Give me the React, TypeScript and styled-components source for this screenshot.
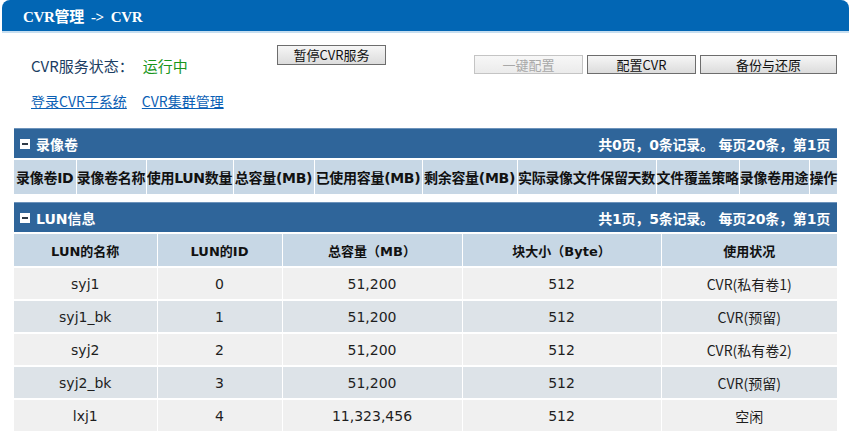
import React from 'react';
import styled, { createGlobalStyle } from 'styled-components';

const GlobalStyle = createGlobalStyle`
  body {
    margin: 0;
    background: #ffffff;
    font-family: "DejaVu Sans", "Noto Sans CJK SC", sans-serif;
  }
`;

interface LunRow {
  name: string;
  id: number;
  total: string;
  block: number;
  usage: string;
}

const volumeColumns: { title: string; width: number }[] = [
  { title: '录像卷ID', width: 62 },
  { title: '录像卷名称', width: 70 },
  { title: '使用LUN数量', width: 87 },
  { title: '总容量(MB)', width: 81 },
  { title: '已使用容量(MB)', width: 108 },
  { title: '剩余容量(MB)', width: 95 },
  { title: '实际录像文件保留天数', width: 139 },
  { title: '文件覆盖策略', width: 83 },
  { title: '录像卷用途', width: 70 },
  { title: '操作', width: 28 },
];

const lunColumns: { title: string; width: number }[] = [
  { title: 'LUN的名称', width: 143 },
  { title: 'LUN的ID', width: 125 },
  { title: '总容量（MB）', width: 180 },
  { title: '块大小（Byte）', width: 199 },
  { title: '使用状况', width: 176 },
];

const lunRows: LunRow[] = [
  { name: 'syj1', id: 0, total: '51,200', block: 512, usage: 'CVR(私有卷1)' },
  { name: 'syj1_bk', id: 1, total: '51,200', block: 512, usage: 'CVR(预留)' },
  { name: 'syj2', id: 2, total: '51,200', block: 512, usage: 'CVR(私有卷2)' },
  { name: 'syj2_bk', id: 3, total: '51,200', block: 512, usage: 'CVR(预留)' },
  { name: 'lxj1', id: 4, total: '11,323,456', block: 512, usage: '空闲' },
];

const App = () => {
  return (
    <>
      <GlobalStyle />
      <Page>
        <TopBar>
          <TopTitle>CVR管理 &nbsp;-&gt;&nbsp; CVR</TopTitle>
        </TopBar>

        <InfoArea>
          <InfoRow>
            <Status>
              CVR服务状态：<Running>运行中</Running>
            </Status>
            <PauseButton>暂停CVR服务</PauseButton>
            <ButtonGroup>
              <Button width={109} disabled>
                一键配置
              </Button>
              <Button width={109}>配置CVR</Button>
              <Button width={137}>备份与还原</Button>
            </ButtonGroup>
          </InfoRow>
          <LinkRow>
            <Link href="#">登录CVR子系统</Link>
            <Link href="#">CVR集群管理</Link>
          </LinkRow>
        </InfoArea>

        <Panel>
          <PanelHeader>
            <PanelTitle>
              <Collapse />
              录像卷
            </PanelTitle>
            <PageInfo>共0页，0条记录。 每页20条，第1页</PageInfo>
          </PanelHeader>
          <Table>
            <colgroup>
              {volumeColumns.map((col) => (
                <col key={col.title} style={{ width: col.width }} />
              ))}
            </colgroup>
            <thead>
              <tr>
                {volumeColumns.map((col) => (
                  <VolumeHead key={col.title}>{col.title}</VolumeHead>
                ))}
              </tr>
            </thead>
          </Table>
        </Panel>

        <Panel>
          <PanelHeader>
            <PanelTitle>
              <Collapse />
              LUN信息
            </PanelTitle>
            <PageInfo>共1页，5条记录。 每页20条，第1页</PageInfo>
          </PanelHeader>
          <Table>
            <colgroup>
              {lunColumns.map((col) => (
                <col key={col.title} style={{ width: col.width }} />
              ))}
            </colgroup>
            <thead>
              <tr>
                {lunColumns.map((col) => (
                  <LunHead key={col.title}>{col.title}</LunHead>
                ))}
              </tr>
            </thead>
            <tbody>
              {lunRows.map((row, index) => (
                <Row key={row.name} striped={index % 2 === 1}>
                  <Cell>{row.name}</Cell>
                  <Cell>{row.id}</Cell>
                  <Cell>{row.total}</Cell>
                  <Cell>{row.block}</Cell>
                  <Cell cjk>{row.usage}</Cell>
                </Row>
              ))}
            </tbody>
          </Table>
        </Panel>
      </Page>
    </>
  );
};

export default App;

const Page = styled.div`
  width: 851px;
  height: 431px;
  overflow: hidden;
`;

const TopBar = styled.div`
  margin: 0 2px;
  height: 31px;
  display: flex;
  align-items: center;
  padding-left: 21px;
  background: #0266b4;
  border-radius: 8px 8px 0 0;
  border-bottom: 2px solid #c6def0;
`;

const TopTitle = styled.span`
  color: #ffffff;
  font-family: "Liberation Serif", "Noto Sans CJK SC", serif;
  font-weight: bold;
  font-size: 15px;
  letter-spacing: -0.3px;
`;

const InfoArea = styled.div`
  padding: 12px 14px 0 31px;
`;

const InfoRow = styled.div`
  display: flex;
  align-items: flex-start;
`;

const Status = styled.div`
  width: 246px;
  margin-top: 11px;
  line-height: 20px;
  font-size: 15px;
  color: #1b3d63;
  font-family: "Noto Sans CJK SC", sans-serif;
`;

const Running = styled.span`
  color: #19961c;
  margin-left: 9px;
`;

const ButtonBase = styled.button`
  height: 20px;
  padding: 0;
  font-family: "Noto Sans CJK SC", sans-serif;
  font-size: 13px;
  line-height: 16px;
  color: #111111;
  border: 1px solid #6d6d6d;
  background: linear-gradient(#f6f6f6, #dcdcdc);
  border-radius: 0;
`;

const PauseButton = styled(ButtonBase)`
  width: 109px;
`;

const ButtonGroup = styled.div`
  margin-left: auto;
  margin-top: 10px;
  display: flex;
  gap: 4px;
`;

const Button = styled(ButtonBase)<{ width: number }>`
  width: ${({ width }) => width}px;
  height: 19px;

  &:disabled {
    color: #a8a8a8;
    border-color: #c4c4c4;
    background: linear-gradient(#f7f7f7, #ebebeb);
  }
`;

const LinkRow = styled.div`
  margin-top: 15px;
  display: flex;
  gap: 15px;
  line-height: 20px;
`;

const Link = styled.a`
  font-family: "Noto Sans CJK SC", sans-serif;
  font-size: 14px;
  color: #0b5fb5;
  text-decoration: underline;
`;

const Panel = styled.div`
  margin: 17px 14px 0;

  & + & {
    margin-top: 7px;
  }
`;

const PanelHeader = styled.div`
  height: 29px;
  display: flex;
  align-items: center;
  justify-content: space-between;
  padding: 0 7px 0 6px;
  background: #2f659a;
  border-top: 1px solid #6d93bb;
  color: #ffffff;
  font-weight: bold;
`;

const PanelTitle = styled.div`
  display: flex;
  align-items: center;
  gap: 6px;
  font-size: 14px;
  font-family: "DejaVu Sans", "Noto Sans CJK SC", sans-serif;
`;

const Collapse = styled.span`
  position: relative;
  width: 10px;
  height: 10px;
  background: #ffffff;

  &::after {
    content: '';
    position: absolute;
    left: 2px;
    right: 2px;
    top: 4px;
    height: 2px;
    background: #2f3a46;
  }
`;

const PageInfo = styled.div`
  font-size: 14px;
  letter-spacing: -0.2px;
  font-family: "DejaVu Sans", "Noto Sans CJK SC", sans-serif;
`;

const Table = styled.table`
  width: 100%;
  table-layout: fixed;
  border-collapse: collapse;
`;

const VolumeHead = styled.th`
  height: 34px;
  padding: 0;
  background: #c7d7e5;
  border: 1px solid #ffffff;
  border-top-width: 2px;
  font-size: 14px;
  letter-spacing: -0.3px;
  white-space: nowrap;
  overflow: visible;
  color: #111111;
  font-family: "DejaVu Sans", "Noto Sans CJK SC", sans-serif;

  &:first-child {
    border-left: none;
  }
  &:last-child {
    border-right: none;
  }
`;

const LunHead = styled.th`
  height: 32px;
  padding: 0;
  background: #c7d7e5;
  border: 1px solid #ffffff;
  border-top-width: 2px;
  font-size: 13px;
  color: #111111;
  font-family: "DejaVu Sans", "Noto Sans CJK SC", sans-serif;

  &:first-child {
    border-left: none;
  }
  &:last-child {
    border-right: none;
  }
`;

const Row = styled.tr<{ striped: boolean }>`
  background: ${({ striped }) => (striped ? '#dde3e8' : '#f0f0f0')};
`;

const Cell = styled.td<{ cjk?: boolean }>`
  height: 31px;
  padding: 0;
  text-align: center;
  border: 1px solid #ffffff;
  border-top-width: 2px;
  font-size: 14px;
  color: #1e1e1e;
  font-family: ${({ cjk }) =>
    cjk
      ? '"Noto Sans CJK SC", sans-serif'
      : '"DejaVu Sans", "Noto Sans CJK SC", sans-serif'};

  &:first-child {
    border-left: none;
  }
  &:last-child {
    border-right: none;
  }
`;
